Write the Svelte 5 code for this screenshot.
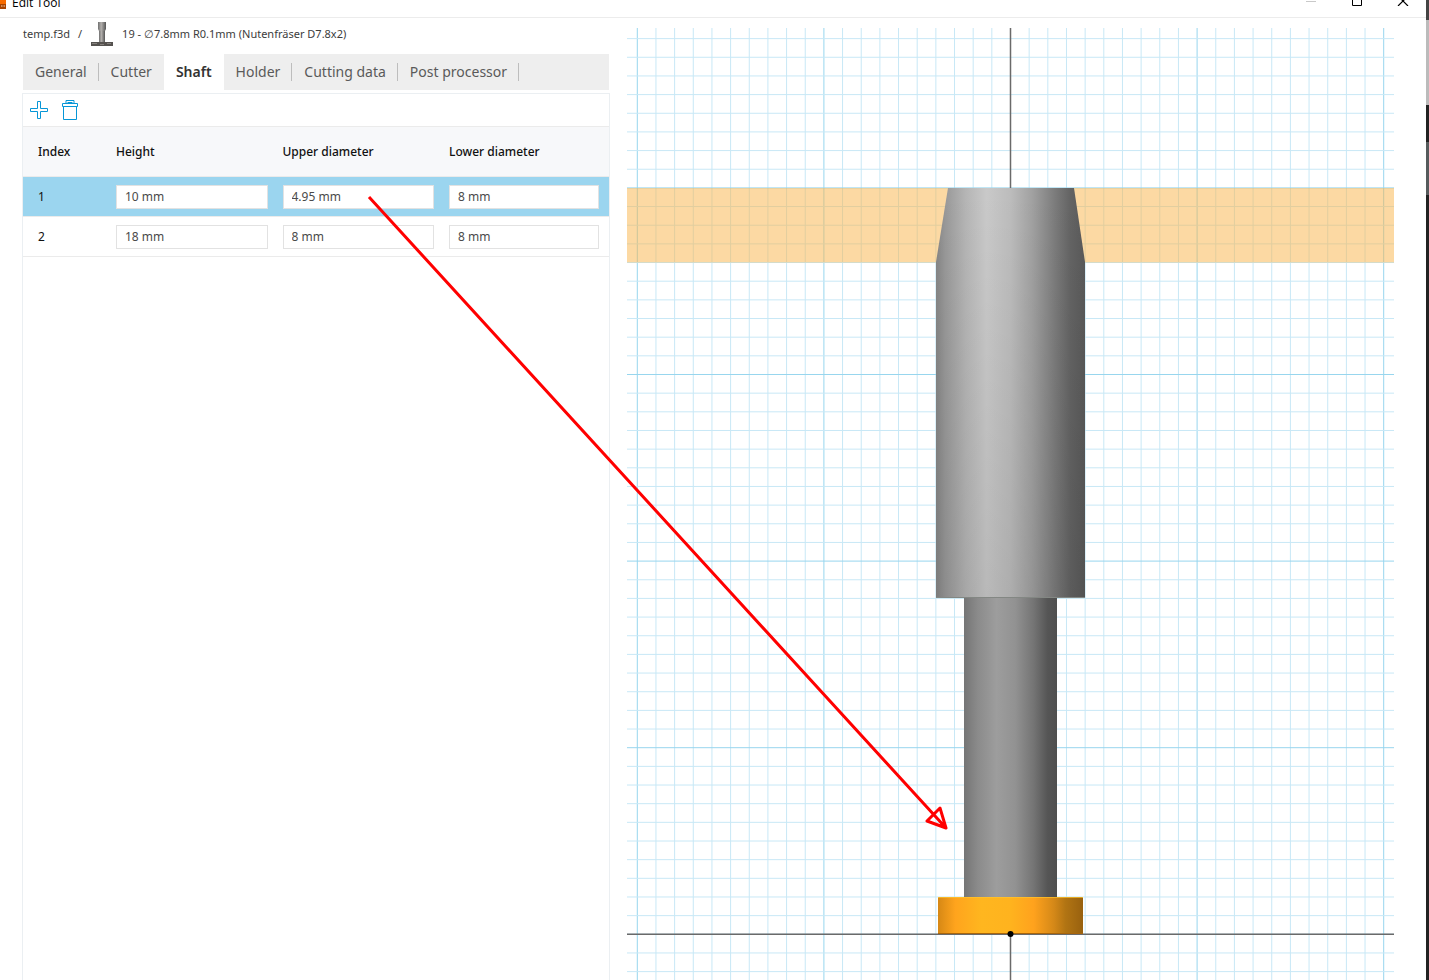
<script>
  const tabs = ['General', 'Cutter', 'Shaft', 'Holder', 'Cutting data', 'Post processor'];
  let active = $state('Shaft');
  let selected = $state(1);
  let rows = $state([
    { index: 1, height: '10 mm', upper: '4.95 mm', lower: '8 mm' },
    { index: 2, height: '18 mm', upper: '8 mm', lower: '8 mm' }
  ]);

  // one grid cell is a tenth of a major division
  const step = 18.66;
  const originX = 383.5;
  const originY = 906.3;
  const range = (from, to) => Array.from({ length: to - from + 1 }, (_, i) => from + i);
  const cols = range(-20, 20).map((n) => ({ n, at: originX + n * step }));
  const lines = range(-48, 2).map((n) => ({ n, at: originY + n * step }));
</script>

<div class="window">
  <header class="titlebar">
    <svg class="app-icon" width="6" height="9" viewBox="0 0 6 9" aria-hidden="true">
      <path d="M0 0H6V9H0Z" fill="#f76b00" />
      <path d="M0 4H6V9H0Z" fill="#a84300" />
      <path d="M1 6H2.500M3.500 6H5" stroke="#f4d6bd" />
    </svg>
    <h1>Edit Tool</h1>
    <div class="controls">
      <button aria-label="Minimize" disabled>
        <svg width="12" height="16" viewBox="0 0 12 16"><path d="M1 11.500H11" stroke="#c9c9c9" /></svg>
      </button>
      <button aria-label="Maximize">
        <svg width="12" height="16" viewBox="0 0 12 16"><path d="M1.500 6.500H10.500V15.500H1.500Z" fill="none" stroke="#000" /></svg>
      </button>
      <button aria-label="Close">
        <svg width="12" height="16" viewBox="0 0 12 16"><path d="M1 6L11 16M11 6L1 16" stroke="#000" stroke-width="1.200" /></svg>
      </button>
    </div>
  </header>

  <main>
    <section class="editor">
      <nav class="crumbs" aria-label="Breadcrumb">
        <a href="#library">temp.f3d</a>
        <span>/</span>
        <svg width="24" height="24" viewBox="0 0 24 24" aria-hidden="true">
          <defs>
            <linearGradient id="mini">
              <stop offset="0" stop-color="#6f6f6f" />
              <stop offset="0.4" stop-color="#b3b0ad" />
              <stop offset="1" stop-color="#555" />
            </linearGradient>
          </defs>
          <path d="M9 8H15V21H9Z" fill="url(#mini)" />
          <path d="M8 0H16V7L15 9H9L8 7Z" fill="url(#mini)" />
          <path d="M1 20H23V24H1Z" fill="#55524f" />
          <path d="M2 21.500H7M10 22.500H14M17 21.500H21" stroke="#85817d" />
        </svg>
        <span>19 - ∅7.8mm R0.1mm (Nutenfräser D7.8x2)</span>
      </nav>

      <div class="tabs" role="tablist">
        {#each tabs as tab}
          <button role="tab" aria-selected={active === tab} class:active={active === tab} onclick={() => (active = tab)}>{tab}</button>
        {/each}
      </div>

      <div class="panel">
        <div class="tools">
          <button aria-label="Add segment">
            <svg width="18" height="20" viewBox="0 0 18 20"><path d="M7.500 1.500H10.500V8.500H17.500V11.500H10.500V18.500H7.500V11.500H0.500V8.500H7.500Z" fill="none" stroke="#0696d7" /></svg>
          </button>
          <button aria-label="Delete segment">
            <svg width="16" height="20" viewBox="0 0 16 20"><path d="M1.500 6.500H14.500V19.500H1.500ZM0.500 3.500H15.500V6.500H0.500ZM4 3V0.500H12V3M5.500 2.500H10.500" fill="none" stroke="#0696d7" /></svg>
          </button>
        </div>
        <table>
          <thead>
            <tr><th class="index">Index</th><th>Height</th><th>Upper diameter</th><th class="last">Lower diameter</th></tr>
          </thead>
          <tbody>
            {#each rows as row}
              <tr class:selected={selected === row.index} onclick={() => (selected = row.index)}>
                <td class="index">{row.index}</td>
                <td><input aria-label="Height {row.index}" bind:value={row.height} /></td>
                <td><input aria-label="Upper diameter {row.index}" bind:value={row.upper} /></td>
                <td><input aria-label="Lower diameter {row.index}" bind:value={row.lower} /></td>
              </tr>
            {/each}
          </tbody>
        </table>
      </div>
    </section>

    <section class="viewer">
      <svg viewBox="0 0 767 952" preserveAspectRatio="xMidYMin slice" role="img" aria-label="Tool preview">
        <defs>
          <linearGradient id="steel">
            <stop offset="0" stop-color="#858585" />
            <stop offset="0.06" stop-color="#989898" />
            <stop offset="0.2" stop-color="#b5b5b5" />
            <stop offset="0.34" stop-color="#c9c9c9" />
            <stop offset="0.5" stop-color="#bcbcbc" />
            <stop offset="0.65" stop-color="#a0a0a0" />
            <stop offset="0.8" stop-color="#7b7b7b" />
            <stop offset="0.9" stop-color="#646464" />
            <stop offset="1" stop-color="#595959" />
          </linearGradient>
          <linearGradient id="neck">
            <stop offset="0" stop-color="#757575" />
            <stop offset="0.15" stop-color="#8b8b8b" />
            <stop offset="0.35" stop-color="#9d9d9d" />
            <stop offset="0.55" stop-color="#929292" />
            <stop offset="0.75" stop-color="#747474" />
            <stop offset="0.9" stop-color="#555" />
            <stop offset="1" stop-color="#4f4f4f" />
          </linearGradient>
          <linearGradient id="blade">
            <stop offset="0" stop-color="#d68815" />
            <stop offset="0.12" stop-color="#ffa41d" />
            <stop offset="0.3" stop-color="#ffb61f" />
            <stop offset="0.5" stop-color="#ffb31e" />
            <stop offset="0.66" stop-color="#ffa21d" />
            <stop offset="0.8" stop-color="#d48818" />
            <stop offset="0.88" stop-color="#b17413" />
            <stop offset="1" stop-color="#98610f" />
          </linearGradient>
          <linearGradient id="shade" x1="0" y1="0" x2="0" y2="1">
            <stop offset="0" stop-color="#000" stop-opacity="0" />
            <stop offset="1" stop-color="#000" stop-opacity="0.08" />
          </linearGradient>
        </defs>
        {#each cols as c}
          <path d="M{c.at} 0V952" stroke={c.n % 10 === 0 ? '#98d6ee' : '#c8e8f6'} />
        {/each}
        {#each lines as l}
          <path d="M0 {l.at}H767" stroke={l.n % 10 === 0 ? '#98d6ee' : '#c8e8f6'} />
        {/each}
        <path d="M0 160H767V234.500H0Z" fill="#fab447" fill-opacity="0.5" />
        <path d="M383.500 0V952M0 906.300H767" stroke="#6a6a6a" stroke-width="1.500" />
        <path d="M337 570H430V869H337Z" fill="url(#neck)" />
        <path d="M321 160H447L458 234V570H309V234Z" fill="url(#steel)" />
        <path d="M321 160H447L458 234V570H309V234Z" fill="url(#shade)" />
        <path d="M309 569.500H458" stroke="#838783" />
        <rect x="311" y="869" width="145" height="37" rx="1" fill="url(#blade)" />
        <path d="M311 869.500H456" stroke="#ffc42e" stroke-opacity="0.700" />
        <path d="M311 905.500H456" stroke="#a8650c" />
        <circle cx="383.500" cy="906" r="3" fill="#000" />
      </svg>
    </section>
  </main>

  <div class="edge" aria-hidden="true"></div>
  <svg class="arrow" viewBox="0 0 1429 980" preserveAspectRatio="none" aria-hidden="true">
    <path d="M369 197L946 828M940 808L946 828L927 821Z" fill="none" stroke="#f00" stroke-width="3" stroke-linejoin="round" />
  </svg>
</div>

<style>
  :global(body) { margin: 0; }
  .window {
    position: relative;
    display: flex;
    flex-direction: column;
    min-height: 100vh;
    background: #fff;
    color: #3c3c3c;
    font: 12px/16px "Noto Sans", sans-serif;
    overflow: hidden;
  }
  button { border: 0; padding: 0; background: none; font: inherit; color: inherit; }
  svg { display: block; }
  .titlebar {
    display: flex;
    align-items: flex-start;
    height: 17px;
    border-bottom: 1px solid #ececec;
    overflow: hidden;
  }
  h1 { margin: -6px 0 0 6px; font: 12px/17px "Open Sans", sans-serif; color: #000; }
  .controls { display: flex; gap: 34px; margin: -10px 20px 0 auto; }
  main {
    flex: 1;
    display: grid;
    grid-template-columns: 588fr 767fr;
    gap: 17px;
    padding: 0 35px 0 22px;
  }
  .editor { display: flex; flex-direction: column; min-width: 0; }
  .crumbs { display: flex; align-items: center; gap: 8px; height: 24px; margin: 4px 0 8px 1px; font-size: 11px; }
  .crumbs a { color: inherit; text-decoration: none; }
  .tabs { display: flex; height: 36px; margin: 0 1px 3px; background: #eee; }
  .tabs button { position: relative; padding: 0 12px; font-size: 14px; color: #5a5a5a; }
  .tabs button::after { content: ""; position: absolute; right: 0; top: 9px; height: 18px; border-right: 1px solid #bdbdbd; }
  .tabs .active { background: #fff; color: #333; font-weight: 600; }
  .tabs .active::after, .tabs button:has(+ .active)::after { display: none; }
  .panel { flex: 1; border: 1px solid #ebeff2; border-bottom: 0; }
  .tools { display: flex; align-items: center; gap: 14px; height: 32px; padding-left: 7px; }
  table { width: 100%; border-collapse: collapse; table-layout: fixed; color: #111; }
  th { height: 49px; padding: 0; background: #f7f8fa; text-align: left; font-weight: 500; }
  tr { border-top: 1px solid #ebebeb; }
  tbody tr:last-child { border-bottom: 1px solid #ebebeb; }
  td { height: 39px; padding: 0 15px 0 0; }
  .index { width: 78px; padding-left: 15px; padding-right: 0; }
  .last { width: 160px; }
  .selected { background: #9bd5ef; }
  input {
    display: block;
    box-sizing: border-box;
    width: 100%;
    height: 24px;
    padding: 0 8px;
    border: 1px solid #e2e2e2;
    background: #fff;
    color: #4a4a4a;
    font: inherit;
  }
  td:last-child { padding-right: 10px; }
  .viewer { position: relative; margin-top: 10px; min-width: 0; }
  .viewer svg { position: absolute; inset: 0; width: 100%; height: 100%; }
  .edge {
    position: absolute;
    inset: 0 0 0 auto;
    width: 3px;
    background: linear-gradient(#444 20px, #bbb 20px, #bbb 105px, #222 105px, #222 142px, #565b5c 142px, #565b5c 195px, #222 195px);
  }
  .arrow { position: absolute; inset: 0; width: 100%; height: 100%; pointer-events: none; }
</style>
